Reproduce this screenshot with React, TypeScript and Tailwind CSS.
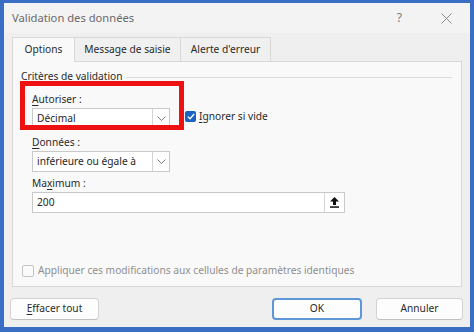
import React from 'react';

// Boîte de dialogue "Validation des données" (Excel, Windows 11)

function Chevron() {
  return (
    <svg width="9" height="5" viewBox="0 0 9 5" className="block">
      <path d="M0.5 0.5 L4.5 4.5 L8.5 0.5" fill="none" stroke="#7a7a7a" strokeWidth="1" />
    </svg>
  );
}

function Select({ value }: { value: string }) {
  return (
    <div className="w-[138px] h-[21px] bg-white border border-[#c9c9c9] flex items-stretch">
      <span className="flex-1 pl-[4px] leading-[19px] whitespace-nowrap text-[#262626]">{value}</span>
      <div className="w-[17px] border-l border-[#d4d4d4] flex items-center justify-center">
        <Chevron />
      </div>
    </div>
  );
}

function Tab({ label, active, width }: { label: string; active?: boolean; width: string }) {
  return (
    <div
      className={`${width} h-[25px] flex items-center justify-center border-t border-r border-[#d8d8d8] ${
        active ? 'bg-[#f9f9f9] border-l' : 'bg-[#f0f0f0] border-b'
      } text-[#2a2a2a]`}
    >
      {label}
    </div>
  );
}

export default function App() {
  return (
    <div className="w-[474px] h-[332px] bg-[#3a6ec4] pt-[3px] px-[4px] pb-[5px] font-['Noto_Sans',sans-serif] text-[10.2px] text-[#2a2a2a]">
      <div className="relative h-full bg-[#efefef] flex flex-col">
        {/* barre de titre */}
        <div className="h-[30px] shrink-0 bg-[#f3f3f3] flex items-center pl-[8px] pr-[18px]">
          <span className="text-[11.2px] text-[#6a6a6a]">Validation des données</span>
          <span className="ml-auto mr-[39px] text-[12px] text-[#7a7a7a]">?</span>
          <svg width="11" height="11" viewBox="0 0 11 11" className="block">
            <path d="M0.5 0.5 L10.5 10.5 M10.5 0.5 L0.5 10.5" stroke="#8a8a8a" strokeWidth="1" />
          </svg>
        </div>

        {/* onglets */}
        <div className="mt-[4px] px-[8px] flex shrink-0">
          <Tab label="Options" active width="w-[63px]" />
          <Tab label="Message de saisie" width="w-[106px]" />
          <Tab label="Alerte d'erreur" width="w-[90px]" />
          <div className="flex-1 border-b border-[#d8d8d8]" />
        </div>

        {/* contenu */}
        <div className="mx-[8px] h-[225px] shrink-0 bg-[#f9f9f9] border-x border-b border-[#d8d8d8] flex flex-col pt-[7px] pb-[7px]">
          <div className="flex items-center pl-[8px] pr-[9px] h-[16px]">
            <span>Critères de validation</span>
            <div className="flex-1 h-px bg-[#dcdcdc] ml-[3px]" />
          </div>

          <div className="pl-[19px] mt-[6px] flex flex-col">
            <span className="h-[16px] leading-[16px]">
              <span className="underline underline-offset-2">A</span>utoriser :
            </span>
            <div className="mt-[1px] flex items-center">
              <Select value="Décimal" />
              <div className="ml-[15px] -mt-[4px] flex items-center">
                <div className="w-[11px] h-[11px] rounded-[2px] bg-[#1a62c4] flex items-center justify-center">
                  <svg width="8" height="7" viewBox="0 0 8 7" className="block">
                    <path d="M0.8 3.6 L3 5.8 L7.2 1" fill="none" stroke="white" strokeWidth="1.3" />
                  </svg>
                </div>
                <span className="ml-[3px]">
                  <span className="underline underline-offset-2">I</span>gnorer si vide
                </span>
              </div>
            </div>

            <span className="mt-[5px] h-[16px] leading-[16px]">
              <span className="underline underline-offset-2">D</span>onnées :
            </span>
            <div className="mt-[1px]">
              <Select value="inférieure ou égale à" />
            </div>

            <span className="mt-[3px] h-[16px] leading-[16px]">
              Ma<span className="underline underline-offset-2">x</span>imum :
            </span>
            <div className="mt-[1px] w-[313px] h-[21px] bg-white border border-[#c9c9c9] flex items-stretch">
              <span className="flex-1 pl-[4px] leading-[19px] text-[#262626]">200</span>
              <div className="w-[20px] border-l border-[#d4d4d4] flex items-center justify-center">
                <svg width="9" height="11" viewBox="0 0 9 11" className="block">
                  <path d="M4.5 0 L9 4.5 L6 4.5 L6 8 L3 8 L3 4.5 L0 4.5 Z" fill="#111" />
                  <rect x="0" y="9.3" width="9" height="1.5" fill="#111" />
                </svg>
              </div>
            </div>
          </div>

          <div className="mt-auto pl-[9px] flex items-center h-[16px]">
            <div className="w-[12px] h-[12px] rounded-[2px] border border-[#c4c4c4] bg-[#fafafa]" />
            <span className="ml-[4px] text-[#8f8f8f]">
              Appliquer ces modifications aux cellules de paramètres identiques
            </span>
          </div>
        </div>

        {/* boutons */}
        <div className="mt-[11px] flex pl-[6px] pr-[7px]">
          <button className="w-[89px] h-[22px] rounded-[4px] bg-[#fdfdfd] border border-[#d3d3d3] border-b-[#c0c0c0] text-[#2a2a2a]">
            <span className="underline underline-offset-2">E</span>ffacer tout
          </button>
          <button className="ml-auto w-[90px] h-[22px] rounded-[4px] bg-[#fdfdfd] border-2 border-[#5d97d8] text-[#2a2a2a]">
            OK
          </button>
          <button className="ml-[14px] w-[87px] h-[22px] rounded-[4px] bg-[#fdfdfd] border border-[#d3d3d3] border-b-[#c0c0c0] text-[#2a2a2a]">
            Annuler
          </button>
        </div>

        {/* cadre rouge d'annotation */}
        <div className="absolute left-[16px] top-[78px] w-[164px] h-[49px] border-[5px] border-[#ee1111] pointer-events-none" />
      </div>
    </div>
  );
}
